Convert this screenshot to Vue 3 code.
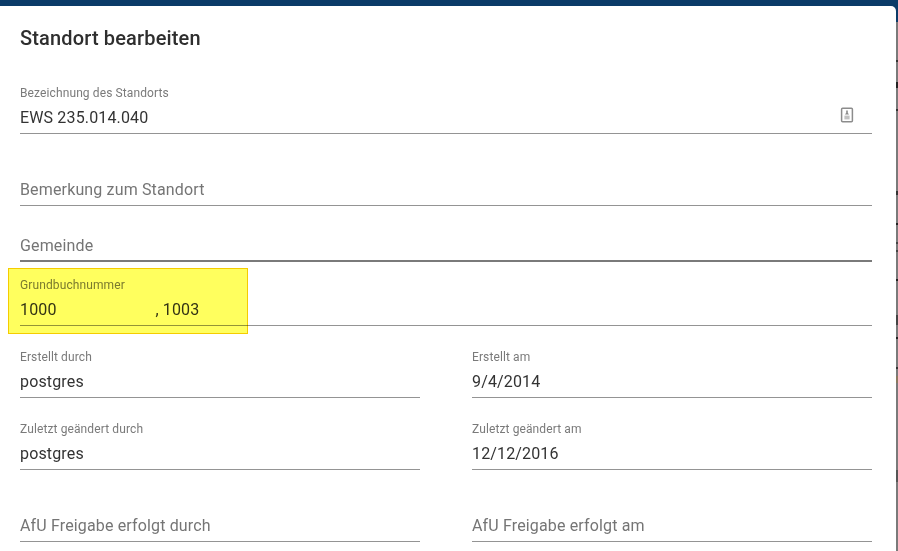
<template>
  <div class="page">
    <div class="topbar"></div>
    <div class="body">
      <div class="dialog">
        <h2 class="title">Standort bearbeiten</h2>

        <div class="field first">
          <label class="label">Bezeichnung des Standorts</label>
          <div class="value">EWS 235.014.040</div>
          <svg class="badge" width="14" height="16" viewBox="0 0 14 16">
            <rect x="1.6" y="1.2" width="10.8" height="13.6" rx="1" fill="#fff" stroke="#8c8c8c" stroke-width="1.5" />
            <path d="M6.2 3.6h1.6v2.2l1.2 1.6h-4l1.2-1.6z" fill="#8c8c8c" />
            <rect x="4.4" y="8.6" width="5.2" height="3.8" fill="#c2c2c2" />
          </svg>
        </div>

        <div class="field gap-big empty">
          <div class="placeholder">Bemerkung zum Standort</div>
        </div>

        <div class="field empty dark">
          <div class="placeholder">Gemeinde</div>
        </div>

        <div class="field gap-small">
          <label class="label">Grundbuchnummer</label>
          <div class="value pre">{{ grundbuch }}</div>
          <div class="highlight"></div>
        </div>

        <div class="row">
          <div class="field">
            <label class="label">Erstellt durch</label>
            <div class="value">postgres</div>
          </div>
          <div class="field">
            <label class="label">Erstellt am</label>
            <div class="value">9/4/2014</div>
          </div>
        </div>

        <div class="row">
          <div class="field">
            <label class="label">Zuletzt geändert durch</label>
            <div class="value">postgres</div>
          </div>
          <div class="field">
            <label class="label">Zuletzt geändert am</label>
            <div class="value">12/12/2016</div>
          </div>
        </div>

        <div class="row">
          <div class="field empty">
            <div class="placeholder">AfU Freigabe erfolgt durch</div>
          </div>
          <div class="field empty">
            <div class="placeholder">AfU Freigabe erfolgt am</div>
          </div>
        </div>
      </div>
      <div class="backdrop"></div>
    </div>
  </div>
</template>

<script setup>
// blanked-out part of the number keeps its width
const grundbuch = '1000' + ' '.repeat(24) + ', 1003'
</script>

<style scoped>
.page {
  width: 898px;
  height: 551px;
  overflow: hidden;
  font-family: Roboto, "Liberation Sans", sans-serif;
  display: flex;
  flex-direction: column;
}

.topbar {
  height: 6px;
  flex: none;
  background: #0b3b68;
}

.body {
  flex: 1;
  display: flex;
  min-height: 0;
  background: #0b3b68;
}

.dialog {
  width: 896px;
  flex: none;
  background: #fff;
  border-radius: 0 5px 0 0;
  padding: 0 24px 0 20px;
  box-sizing: border-box;
}

.backdrop {
  flex: 1;
  margin-top: 16px;
  background:
    linear-gradient(#333, #333) 0 38px / 100% 2px no-repeat,
    linear-gradient(#222, #222) 0 60px / 100% 6px no-repeat,
    linear-gradient(#333, #333) 0 87px / 100% 2px no-repeat,
    linear-gradient(#333, #333) 0 169px / 100% 4px no-repeat,
    linear-gradient(#222, #222) 0 201px / 100% 2px no-repeat,
    linear-gradient(#444, #444) 0 220px / 100% 2px no-repeat,
    linear-gradient(#444, #444) 0 228px / 100% 2px no-repeat,
    linear-gradient(#222, #222) 0 257px / 100% 2px no-repeat,
    linear-gradient(#444, #444) 0 293px / 100% 10px no-repeat,
    linear-gradient(#222, #222) 0 315px / 100% 2px no-repeat,
    linear-gradient(#333, #333) 0 345px / 100% 2px no-repeat,
    linear-gradient(#8a7a60, #8a7a60) 0 354px / 100% 7px no-repeat,
    linear-gradient(#555, #555) 0 448px / 100% 12px no-repeat,
    #7a7a7a;
}

.title {
  margin: 0;
  padding-top: 20px;
  height: 24px;
  line-height: 24px;
  font-size: 20px;
  font-weight: 500;
  letter-spacing: 0.15px;
  color: #2e2e2e;
}

.field {
  position: relative;
  height: 56px;
  box-sizing: border-box;
  border-bottom: 1px solid #949494;
  flex: 1;
}

.field.first {
  margin-top: 28px;
}

.field.gap-big {
  margin-top: 16px;
}

.field.gap-small {
  margin-top: 8px;
}

.field.dark {
  border-bottom-color: #7a7a7a;
  border-bottom-width: 2px;
}

.row {
  display: flex;
  gap: 52px;
  margin-top: 16px;
}

.label {
  display: block;
  padding-top: 8px;
  height: 14px;
  line-height: 14px;
  font-size: 12px;
  letter-spacing: 0.009375em;
  color: #7a7a7a;
}

.value {
  margin-top: 6px;
  line-height: 24px;
  font-size: 16px;
  letter-spacing: 0.009375em;
  color: #333;
}

.value.pre {
  white-space: pre;
}

.placeholder {
  padding-top: 28px;
  line-height: 24px;
  font-size: 16px;
  letter-spacing: 0.009375em;
  color: #757575;
}

.badge {
  position: absolute;
  right: 18px;
  top: 29px;
}

.highlight {
  position: absolute;
  left: -12px;
  top: -2px;
  width: 240px;
  height: 66px;
  box-sizing: border-box;
  background: #ffff5e;
  border: 1px solid #f5cc00;
  mix-blend-mode: multiply;
}
</style>

<style>
html,
body {
  margin: 0;
}
</style>
